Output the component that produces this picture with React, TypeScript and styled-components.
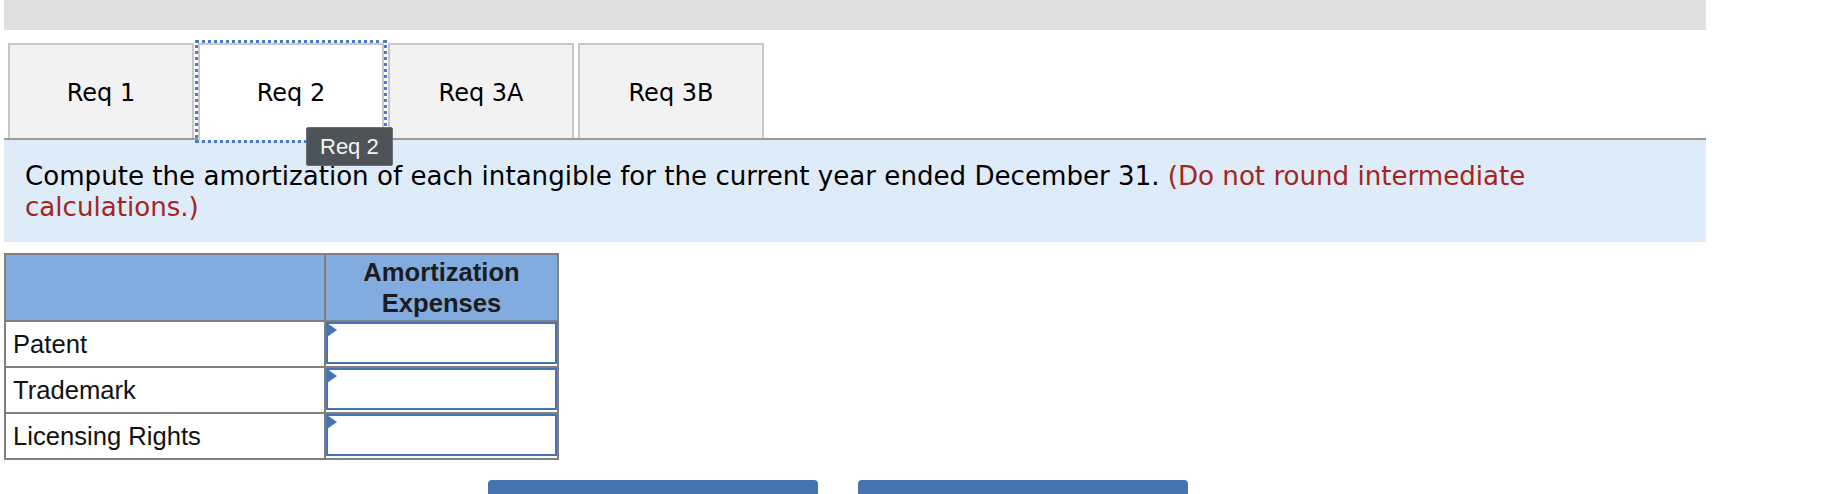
import React from 'react';
import styled, { createGlobalStyle } from 'styled-components';

const GlobalStyle = createGlobalStyle`
  html, body {
    margin: 0;
    padding: 0;
    background: #fff;
    overflow: hidden;
  }
`;

interface TabProps {
  $active?: boolean;
}

const Page = styled.div`
  width: 1702px;
  margin-left: 4px;
  font-family: 'DejaVu Sans', Verdana, sans-serif;
  color: #000;
`;

const TopBar = styled.div`
  height: 30px;
  background-color: #e0e0e0;
`;

const TabBar = styled.div`
  display: flex;
  align-items: flex-start;
  gap: 4px;
  margin-top: 13px;
  padding-left: 4px;
  height: 95px;
  border-bottom: 2px solid #999;
`;

const Tab = styled.div<TabProps>`
  position: relative;
  box-sizing: border-box;
  width: 186px;
  height: ${p => (p.$active ? '97px' : '95px')};
  display: flex;
  align-items: center;
  justify-content: center;
  border: 2px solid #c8c8c8;
  border-bottom: none;
  background-color: ${p => (p.$active ? '#fff' : '#f2f2f2')};
  outline: ${p => (p.$active ? '3px dotted #4a7bc4' : 'none')};
  z-index: ${p => (p.$active ? 1 : 0)};
  font-size: 24px;
  padding-top: ${p => (p.$active ? '0' : '2px')};
  cursor: pointer;
`;

const Tooltip = styled.div`
  position: absolute;
  left: 106px;
  top: 82px;
  padding: 0 13px;
  height: 39px;
  line-height: 38px;
  box-sizing: border-box;
  background-color: #4d5356;
  border: 1px solid #6a6f72;
  border-radius: 2px;
  color: #f4f4f4;
  font-family: 'Liberation Sans', Arial, sans-serif;
  font-size: 22px;
  white-space: nowrap;
`;

const Instructions = styled.div`
  background-color: #deebf8;
  padding: 21px 60px 20px 21px;
  font-size: 26.1px;
  line-height: 30.6px;
`;

const Note = styled.span`
  color: #a4251e;
`;

const Grid = styled.div`
  display: grid;
  grid-template-columns: 318px 231px;
  grid-template-rows: 65px 44px 44px 44px;
  gap: 2px;
  padding: 2px;
  width: fit-content;
  margin-top: 11px;
  background-color: #7f7f7f;
  font-family: 'Liberation Sans', Arial, sans-serif;
  font-size: 25.6px;
`;

const HeadCell = styled.div`
  background-color: #82abe0;
  display: flex;
  align-items: center;
  justify-content: center;
  text-align: center;
  font-weight: bold;
  line-height: 30.6px;
  color: #1c1c1c;
`;

const LabelCell = styled.div`
  background-color: #fff;
  display: flex;
  align-items: center;
  padding-left: 7px;
  color: #111;
`;

const InputCell = styled.div`
  position: relative;
  background-color: #fff;
`;

const AmountInput = styled.input`
  display: block;
  box-sizing: border-box;
  width: 100%;
  height: 42px;
  margin: 0;
  border: 2px solid #4673b5;
  border-radius: 0;
  outline: none;
  font-family: 'Liberation Sans', Arial, sans-serif;
  font-size: 24px;
  text-align: right;
  padding: 0 8px;
`;

const Marker = styled.svg`
  position: absolute;
  left: 1px;
  top: 1px;
  pointer-events: none;
`;

const ButtonRow = styled.div`
  display: flex;
  gap: 40px;
  margin-top: 20px;
  padding-left: 484px;
`;

const NavButton = styled.button`
  width: 330px;
  height: 56px;
  border: none;
  border-radius: 4px;
  background-color: #4674b1;
  color: #fff;
  font-family: 'Liberation Sans', Arial, sans-serif;
  font-size: 24px;
`;

const tabs = ['Req 1', 'Req 2', 'Req 3A', 'Req 3B'];
const rows = ['Patent', 'Trademark', 'Licensing Rights'];

const App = () => {
  const [active, setActive] = React.useState(1);
  return (
    <Page>
      <GlobalStyle />
      <TopBar />
      <TabBar>
        {tabs.map((t, i) => (
          <Tab key={t} $active={i === active} onClick={() => setActive(i)}>
            {t}
            {i === active && <Tooltip>{t}</Tooltip>}
          </Tab>
        ))}
      </TabBar>
      <Instructions>
        Compute the amortization of each intangible for the current year ended December 31.{' '}
        <Note>(Do not round intermediate calculations.)</Note>
      </Instructions>
      <Grid>
        <HeadCell />
        <HeadCell>
          Amortization
          <br />
          Expenses
        </HeadCell>
        {rows.map(r => (
          <React.Fragment key={r}>
            <LabelCell>{r}</LabelCell>
            <InputCell>
              <AmountInput type="text" aria-label={r} />
              <Marker width="10" height="14" viewBox="0 0 10 14">
                <polygon points="0,0 10,7 0,14" fill="#4673b5" />
              </Marker>
            </InputCell>
          </React.Fragment>
        ))}
      </Grid>
      <ButtonRow>
        <NavButton />
        <NavButton />
      </ButtonRow>
    </Page>
  );
};

export default App;
